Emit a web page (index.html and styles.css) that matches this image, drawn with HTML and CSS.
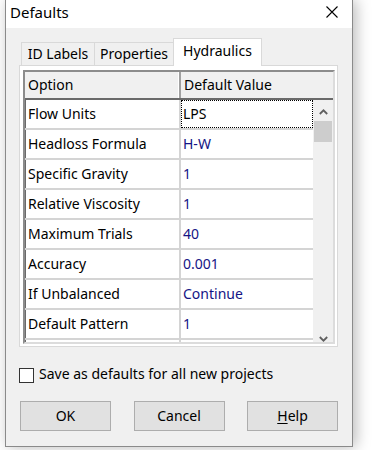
FILE: index.html
```html
<!DOCTYPE html>
<html>
<head>
<meta charset="utf-8">
<link rel="stylesheet" href="styles.css">
</head>
<body>
<div class="window">
  <div class="titlebar">
    <span class="title">Defaults</span>
    <svg class="close" width="12" height="12" viewBox="0 0 12 12"><path d="M0.5 0.5 L11.5 11.5 M11.5 0.5 L0.5 11.5" stroke="#000" stroke-width="1.1" fill="none"/></svg>
  </div>
  <div class="client">
    <div class="tabs">
      <div class="tab t1">ID Labels</div>
      <div class="tab t2">Properties</div>
      <div class="tab t3 selected">Hydraulics</div>
    </div>
    <div class="panel">
      <div class="grid">
        <div class="header">
          <div class="hcell c1">Option</div>
          <div class="hcell c2">Default Value</div>
        </div>
        <div class="gbody">
          <div class="rows">
            <div class="row"><div class="cell c1">Flow Units</div><div class="cell c2 focus">LPS</div></div>
            <div class="row"><div class="cell c1">Headloss Formula</div><div class="cell c2 val">H-W</div></div>
            <div class="row"><div class="cell c1">Specific Gravity</div><div class="cell c2 val">1</div></div>
            <div class="row"><div class="cell c1">Relative Viscosity</div><div class="cell c2 val">1</div></div>
            <div class="row"><div class="cell c1">Maximum Trials</div><div class="cell c2 val">40</div></div>
            <div class="row"><div class="cell c1">Accuracy</div><div class="cell c2 val">0.001</div></div>
            <div class="row"><div class="cell c1">If Unbalanced</div><div class="cell c2 val">Continue</div></div>
            <div class="row"><div class="cell c1">Default Pattern</div><div class="cell c2 val">1</div></div>
            <div class="row"><div class="cell c1"></div><div class="cell c2"></div></div>
          </div>
          <div class="scrollbar">
            <svg class="arrow" width="9" height="6" viewBox="0 0 9 6"><path d="M0.8 5 L4.5 1.3 L8.2 5" stroke="#606060" stroke-width="1.8" fill="none"/></svg>
            <div class="thumb"></div>
            <div class="track"></div>
            <svg class="arrow" width="9" height="6" viewBox="0 0 9 6"><path d="M0.8 1 L4.5 4.7 L8.2 1" stroke="#606060" stroke-width="1.8" fill="none"/></svg>
          </div>
        </div>
      </div>
    </div>
    <label class="check"><span class="box"></span><span class="clabel">Save as defaults for all new projects</span></label>
    <div class="buttons">
      <div class="btn">OK</div>
      <div class="btn">Cancel</div>
      <div class="btn"><u>H</u>elp</div>
    </div>
  </div>
</div>
</body>
</html>
```

FILE: styles.css
```css
html, body {
  margin: 0;
  padding: 0;
  background: #ffffff;
}
body {
  width: 377px;
  height: 450px;
  overflow: hidden;
  font-family: "Noto Sans", "Open Sans", sans-serif;
  font-size: 14px;
  color: #000;
}
.window {
  margin-left: 5px;
  width: 346px;
  height: 446px;
  border: 1px solid #8a8a8a;
  border-top: none;
  box-shadow: 3px 0 14px rgba(0,0,0,0.28);
  background: #f0f0f0;
  display: flex;
  flex-direction: column;
}
.titlebar {
  height: 28px;
  background: #ffffff;
  display: flex;
  align-items: center;
  justify-content: space-between;
  padding: 0 14px 0 4px;
}
.title {
  font-size: 15px;
  line-height: 24px;
  margin-top: -4px;
}
.close {
  display: block;
  margin-top: -4px;
}
.client {
  flex: 1;
  padding: 10px 14px 0 13px;
  display: flex;
  flex-direction: column;
}
.tabs {
  display: flex;
  align-items: flex-end;
  height: 28px;
  padding-left: 2px;
}
.tab {
  box-sizing: border-box;
  height: 24px;
  border: 1px solid #d9d9d9;
  border-bottom: none;
  background: #f0f0f0;
  display: flex;
  align-items: center;
  justify-content: center;
  line-height: 1;
  padding-bottom: 1px;
}
.t1 { width: 74px; }
.t2 { width: 80px; margin-left: -1px; }
.t3 { width: 89px; margin-left: -1px; }
.tab.selected {
  height: 28px;
  background: #ffffff;
  position: relative;
  z-index: 1;
  padding-bottom: 3px;
}
.panel {
  margin-top: -1px;
  width: 319px;
  height: 282px;
  box-sizing: border-box;
  border: 1px solid #d9d9d9;
  background: #ffffff;
  padding: 4px 2px 1px 3px;
}
.grid {
  box-sizing: border-box;
  width: 312px;
  height: 274px;
  border: 2px solid;
  border-color: #8c8c8c #dcdcdc #dcdcdc #8c8c8c;
  box-shadow: inset 1px 1px 0 #6a6a6a;
  display: flex;
  flex-direction: column;
  overflow: hidden;
}
.header {
  display: flex;
  height: 28px;
  box-sizing: border-box;
  background: #f0f0f0;
  border-bottom: 2px solid #6a6a6a;
  flex: none;
}
.hcell {
  display: flex;
  align-items: center;
  padding-left: 3px;
  padding-bottom: 1px;
  box-sizing: border-box;
}
.header .c1 {
  width: 156px;
  border-right: 2px solid #a0a0a0;
  box-shadow: inset -1px 0 0 #ffffff;
}
.header .c2 {
  flex: 1;
  padding-left: 3px;
}
.gbody {
  flex: 1;
  display: flex;
  overflow: hidden;
}
.rows {
  width: 288px;
  flex: none;
}
.row {
  display: flex;
  height: 30px;
  box-sizing: border-box;
  border-bottom: 2px solid #d4d4d4;
}
.cell {
  display: flex;
  align-items: center;
  box-sizing: border-box;
  padding-bottom: 2px;
}
.row .c1 {
  width: 156px;
  padding-left: 3px;
  border-right: 2px solid #d4d4d4;
}
.row .c2 {
  flex: 1;
  padding-left: 2px;
}
.val {
  color: #141485;
}
.focus {
  border: 1px dotted #000;
  padding-left: 1px !important;
  padding-bottom: 1px !important;
}
.scrollbar {
  flex: 1;
  background: #f0f0f0;
  display: flex;
  flex-direction: column;
  align-items: center;
}
.arrow {
  display: block;
  margin: 9px 0 6px;
}
.scrollbar .arrow:last-child {
  margin: 5px 0 0;
}
.thumb {
  width: 18px;
  height: 21px;
  background: #cdcdcd;
}
.track {
  flex: 1;
}
.check {
  display: flex;
  align-items: center;
  margin-top: 20px;
  height: 16px;
}
.box {
  width: 13px;
  height: 13px;
  border: 1px solid #333;
  background: #fff;
  flex: none;
}
.clabel {
  margin-left: 5px;
  line-height: 1;
  padding-bottom: 2px;
}
.buttons {
  display: flex;
  justify-content: space-between;
  margin-top: 18px;
  padding-left: 1px;
}
.btn {
  width: 89px;
  height: 27px;
  border: 1px solid #adadad;
  background: #e1e1e1;
  display: flex;
  align-items: center;
  justify-content: center;
  padding-bottom: 1px;
  box-sizing: content-box;
}
.btn u {
  text-decoration-thickness: 1px;
  text-underline-offset: 2px;
}
```
